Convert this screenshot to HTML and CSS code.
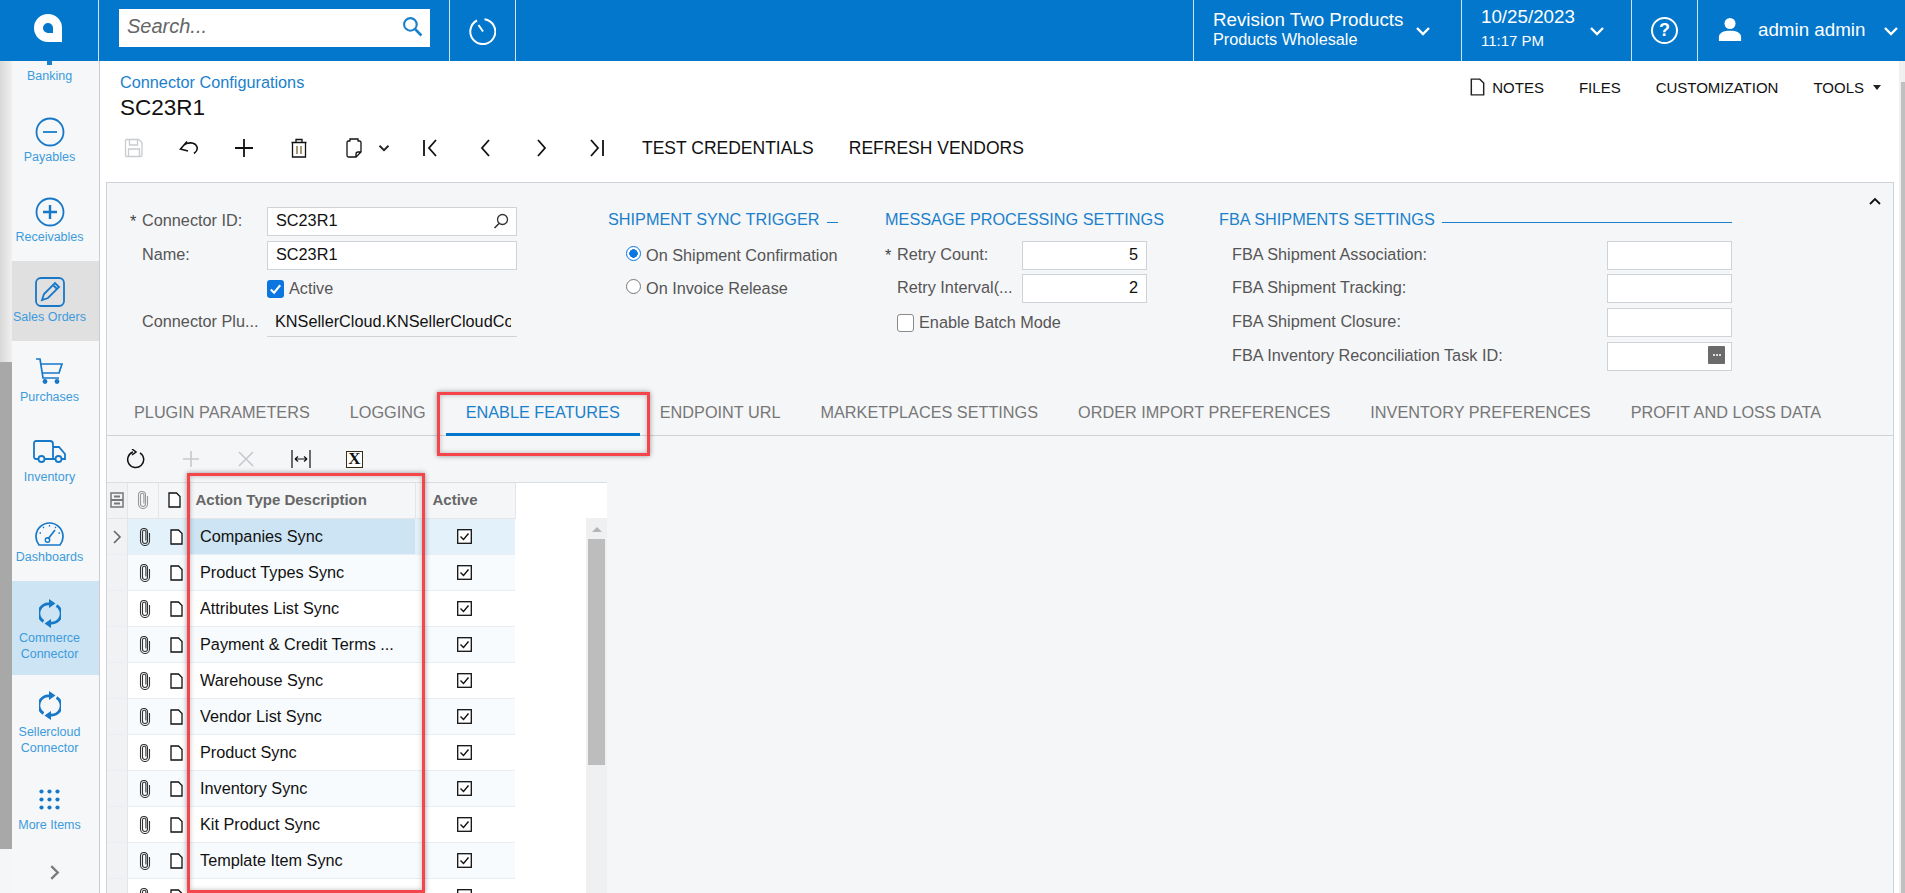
FILE: index.html
```html
<!DOCTYPE html>
<html lang="en">
<head>
<meta charset="utf-8">
<title>Connector Configurations</title>
<link rel="stylesheet" href="styles.css">
</head>
<body>
<svg class="defs" width="0" height="0" aria-hidden="true">
  <symbol id="chev" viewBox="0 0 16 16"><path d="M2 5l6 6 6-6" fill="none" stroke="currentColor" stroke-width="2.4"/></symbol>
  <symbol id="clip" viewBox="0 0 12 18"><path d="M8.5 4v9a2.5 2.5 0 0 1-5 0V4a1.7 1.7 0 0 1 3.4 0v8.5M10.5 5v8a4.5 4.5 0 0 1-9 0V4a3.5 3.5 0 0 1 7 0" fill="none" stroke="currentColor" stroke-width="1.1"/></symbol>
  <symbol id="doc" viewBox="0 0 13 16"><path d="M1 1h7.500L12 4.500V15H1z" fill="#fff" stroke="currentColor" stroke-width="1.300"/></symbol>
  <symbol id="sync" viewBox="0 0 22 29"><path d="M4.500 22.500A9.500 9.500 0 0 1 11 5M17.500 6.500A9.500 9.500 0 0 1 11 24" fill="none" stroke="currentColor" stroke-width="2.800"/><path d="M10 0l6.500 4.500L10 9zM12 20l-6.500 4.500L12 29z" fill="currentColor"/></symbol>
  <symbol id="check" viewBox="0 0 15 15"><rect x=".7" y=".7" width="13.6" height="13.6" fill="#fff" stroke="#111" stroke-width="1.3"/><path d="M3.500 7.500l3 3 5-6" fill="none" stroke="#111" stroke-width="1.400"/></symbol>
</svg>

<header class="topbar">
  <div class="logo-cell">
    <svg class="logo" viewBox="0 0 28 28"><path fill-rule="evenodd" d="M14 0a14 14 0 0 1 14 14v14H14a14 14 0 0 1 0-28zm0 9a5 5 0 1 0 0 10h5v-5a5 5 0 0 0-5-5z" fill="#fff"/></svg>
  </div>
  <div class="search-cell">
    <div class="search">
      <span class="search-text">Search...</span>
      <svg class="search-icon" viewBox="0 0 20 20"><circle cx="8" cy="8" r="6" fill="none" stroke="currentColor" stroke-width="2"/><path d="M12.500 12.500l6 6" stroke="currentColor" stroke-width="2.600"/></svg>
    </div>
  </div>
  <div class="clock-cell">
    <svg class="clock" viewBox="0 0 27 27"><path d="M8 2.500A12.500 12.500 0 1 0 15.500 1.200" fill="none" stroke="#fff" stroke-width="2"/><path d="M9.500 7l4.500 6.500" stroke="#fff" stroke-width="2"/></svg>
  </div>
  <div class="top-spacer"></div>
  <div class="company-cell">
    <div class="stack">
      <span class="company">Revision Two Products</span>
      <span class="branch">Products Wholesale</span>
    </div>
    <svg class="top-chev"><use href="#chev"/></svg>
  </div>
  <div class="date-cell">
    <div class="stack">
      <span class="date">10/25/2023</span>
      <span class="time">11:17 PM</span>
    </div>
    <svg class="top-chev"><use href="#chev"/></svg>
  </div>
  <div class="help-cell">
    <span class="help">?</span>
  </div>
  <div class="user-cell">
    <svg class="user-icon" viewBox="0 0 24 26"><circle cx="12" cy="7" r="6" fill="#fff"/><path d="M0 26v-4c0-5 5-7 12-7s12 2 12 7v4z" fill="#fff"/></svg>
    <span class="user-name">admin admin</span>
    <svg class="top-chev"><use href="#chev"/></svg>
  </div>
</header>

<div class="body-row">
  <div class="side-scroll">
    <div class="side-scroll-top"></div>
    <div class="side-scroll-thumb"></div>
  </div>
  <nav class="nav">
    <div class="nav-list">
      <a class="nav-item banking"><span class="nav-stub"></span><span>Banking</span></a>
      <a class="nav-item"><svg class="nav-icon" viewBox="0 0 30 30"><circle cx="15" cy="15" r="13.500" fill="none" stroke="currentColor" stroke-width="1.800"/><path d="M8 15h14" stroke="#2a8ad4" stroke-width="2"/></svg><span>Payables</span></a>
      <a class="nav-item"><svg class="nav-icon" viewBox="0 0 30 30"><circle cx="15" cy="15" r="13.500" fill="none" stroke="currentColor" stroke-width="1.800"/><path d="M8 15h14M15 8v14" stroke="currentColor" stroke-width="2.400"/></svg><span>Receivables</span></a>
      <a class="nav-item sel-grey"><svg class="nav-icon" viewBox="0 0 30 30"><rect x="1" y="1" width="28" height="28" rx="5" fill="none" stroke="currentColor" stroke-width="1.800"/><path d="M7 23l2-6L20 6l4 4-11 11zM18 8l4 4" fill="none" stroke="currentColor" stroke-width="1.800"/></svg><span>Sales Orders</span></a>
      <a class="nav-item"><svg class="nav-icon cart" viewBox="0 0 27 26"><path d="M0 1h4l3 19h16M5 6h21l-3 9H6.500" fill="none" stroke="currentColor" stroke-width="1.700"/><circle cx="9" cy="23.500" r="2.400" fill="currentColor"/><circle cx="21" cy="23.500" r="2.400" fill="currentColor"/></svg><span>Purchases</span></a>
      <a class="nav-item"><svg class="nav-icon truck" viewBox="0 0 33 23"><path d="M5 19H3a2 2 0 0 1-2-2V3a2 2 0 0 1 2-2h14a3 3 0 0 1 3 3v15h-8M20 7h6l6 7v5h-3M20 19h2" fill="none" stroke="currentColor" stroke-width="1.800"/><circle cx="8.500" cy="19" r="3" fill="none" stroke="currentColor" stroke-width="1.800"/><circle cx="25.500" cy="19" r="3" fill="none" stroke="currentColor" stroke-width="1.800"/></svg><span>Inventory</span></a>
      <a class="nav-item"><svg class="nav-icon gauge" viewBox="0 0 29 25"><path d="M4 24A13.500 13.500 0 1 1 25 24z" fill="none" stroke="currentColor" stroke-width="1.700"/><path d="M13 18l7-9" stroke="currentColor" stroke-width="1.700"/><circle cx="12.500" cy="19" r="2.200" fill="none" stroke="currentColor" stroke-width="1.400"/><path d="M14.500 4v1.500M8 6l1 1M21 6l-1 1M4.500 12H6M25 12h-1.500" stroke="currentColor" stroke-width="1.300"/></svg><span>Dashboards</span></a>
      <a class="nav-item sel-blue two"><svg class="nav-icon sync-icon"><use href="#sync"/></svg><span>Commerce<br>Connector</span></a>
      <a class="nav-item two second"><svg class="nav-icon sync-icon"><use href="#sync"/></svg><span>Sellercloud<br>Connector</span></a>
      <a class="nav-item"><svg class="nav-icon dots" viewBox="0 0 21 21"><g fill="currentColor"><circle cx="2.500" cy="2.500" r="2.100"/><circle cx="10.500" cy="2.500" r="2.100"/><circle cx="18.500" cy="2.500" r="2.100"/><circle cx="2.500" cy="10.500" r="2.100"/><circle cx="10.500" cy="10.500" r="2.100"/><circle cx="18.500" cy="10.500" r="2.100"/><circle cx="2.500" cy="18.500" r="2.100"/><circle cx="10.500" cy="18.500" r="2.100"/><circle cx="18.500" cy="18.500" r="2.100"/></g></svg><span>More Items</span></a>
    </div>
    <svg class="nav-expand" viewBox="0 0 10 14"><path d="M2 1l6 6-6 6" fill="none" stroke="#7a7a7a" stroke-width="2.200"/></svg>
  </nav>

  <main class="content">
    <div class="page-head">
      <div class="titles">
        <a class="crumb">Connector Configurations</a>
        <h1 class="title">SC23R1</h1>
      </div>
      <div class="page-links">
        <svg class="notes-icon"><use href="#doc"/></svg>
        <span class="link notes">NOTES</span>
        <span class="link files">FILES</span>
        <span class="link custom">CUSTOMIZATION</span>
        <span class="link tools">TOOLS</span>
        <span class="caret"></span>
      </div>
    </div>

    <div class="toolbar">
      <svg class="tb" viewBox="0 0 20 20"><path d="M2.500 1.500h12l3.500 3v12.500a1.500 1.500 0 0 1-1.500 1.500h-14a1 1 0 0 1-1-1V2.500a1 1 0 0 1 1-1zM5.500 1.500v5.500h8V1.500M4.500 18.500v-7.500h11v7.500" fill="none" stroke="#c8cbcf" stroke-width="1.300"/></svg>
      <svg class="tb" viewBox="0 0 20 20"><path d="M8 3.500L1.500 11l7.500 2M4.500 7.500C8 4 16 3.500 18 9c1 3-1 5-3 6.500" fill="none" stroke="#111" stroke-width="1.600"/></svg>
      <svg class="tb" viewBox="0 0 20 20"><path d="M10 1v18M1 10h18" stroke="#111" stroke-width="1.800"/></svg>
      <svg class="tb" viewBox="0 0 20 20"><path d="M2.500 4.500h15M7 4.500V1.500h6v3M3.500 4.500v14.500h13V4.500" fill="none" stroke="#111" stroke-width="1.300"/><path d="M8 8v8M12 8v8" stroke="#7a6230" stroke-width="1.300"/></svg>
      <svg class="tb tb-paste" viewBox="0 0 20 20"><path d="M6 3H4.500A1.500 1.500 0 0 0 3 4.500v13A1.500 1.500 0 0 0 4.500 19H12l5-5V4.500A1.500 1.500 0 0 0 15.500 3H14M6 3.500V1h8v2.500M12 19v-3c0-1 1-2 2-2h3" fill="none" stroke="#111" stroke-width="1.300"/></svg>
      <svg class="tb-chev"><use href="#chev"/></svg>
      <svg class="tb" viewBox="0 0 20 20"><path d="M3 2v16M15 2l-7 8 7 8" fill="none" stroke="#111" stroke-width="1.800"/></svg>
      <svg class="tb" viewBox="0 0 20 20"><path d="M13 2l-7 8 7 8" fill="none" stroke="#111" stroke-width="1.800"/></svg>
      <svg class="tb" viewBox="0 0 20 20"><path d="M7 2l7 8-7 8" fill="none" stroke="#111" stroke-width="1.800"/></svg>
      <svg class="tb" viewBox="0 0 20 20"><path d="M5 2l7 8-7 8M17 2v16" fill="none" stroke="#111" stroke-width="1.800"/></svg>
      <button class="tb-text first">TEST CREDENTIALS</button>
      <button class="tb-text">REFRESH VENDORS</button>
    </div>

    <section class="panel">
      <svg class="collapse" viewBox="0 0 12 8"><path d="M1 7l5-5 5 5" fill="none" stroke="#111" stroke-width="1.800"/></svg>
      <div class="form">
        <div class="col col-a">
          <div class="row"><span class="req">*</span><label class="lbl lbl-a">Connector ID:</label><span class="input wide-in">SC23R1<svg class="lookup" viewBox="0 0 16 16"><circle cx="9.500" cy="6.500" r="5" fill="none" stroke="#333" stroke-width="1.300"/><path d="M6 10.500L1.500 15" stroke="#333" stroke-width="1.600"/></svg></span></div>
          <div class="row"><span class="req"></span><label class="lbl lbl-a">Name:</label><span class="input wide-in">SC23R1</span></div>
          <div class="row"><span class="req"></span><span class="lbl lbl-a"></span><span class="cb on"><svg viewBox="0 0 18 18"><path d="M4 9.500l3.500 3.500L14 5" fill="none" stroke="#fff" stroke-width="2.200"/></svg></span><span class="cb-label">Active</span></div>
          <div class="row"><span class="req"></span><label class="lbl lbl-a">Connector Plu...</label><span class="input wide-in flat"><span class="clip-text">KNSellerCloud.KNSellerCloudConnector</span></span></div>
        </div>
        <div class="col col-b">
          <div class="sec"><span class="sec-text">SHIPMENT SYNC TRIGGER</span><span class="sec-line"></span></div>
          <div class="row radio-row"><span class="radio on"></span><span class="opt">On Shipment Confirmation</span></div>
          <div class="row radio-row"><span class="radio"></span><span class="opt">On Invoice Release</span></div>
        </div>
        <div class="col col-c">
          <div class="sec"><span class="sec-text">MESSAGE PROCESSING SETTINGS</span></div>
          <div class="row"><span class="req req-c">*</span><label class="lbl lbl-c">Retry Count:</label><span class="input num">5</span></div>
          <div class="row"><span class="req req-c"></span><label class="lbl lbl-c">Retry Interval(...</label><span class="input num">2</span></div>
          <div class="row batch"><span class="cb"></span><span class="cb-label">Enable Batch Mode</span></div>
        </div>
        <div class="col col-d">
          <div class="sec"><span class="sec-text">FBA SHIPMENTS SETTINGS</span><span class="sec-line grow"></span></div>
          <div class="row fba"><label class="lbl lbl-d">FBA Shipment Association:</label><span class="input small"></span></div>
          <div class="row fba"><label class="lbl lbl-d">FBA Shipment Tracking:</label><span class="input small"></span></div>
          <div class="row fba"><label class="lbl lbl-d">FBA Shipment Closure:</label><span class="input small"></span></div>
          <div class="row fba"><label class="lbl lbl-d">FBA Inventory Reconciliation Task ID:</label><span class="input small"><span class="dots-btn"><i></i><i></i><i></i></span></span></div>
        </div>
      </div>

      <div class="tabs">
        <span class="tab">PLUGIN PARAMETERS</span>
        <span class="tab">LOGGING</span>
        <span class="tab active">ENABLE FEATURES</span>
        <span class="tab">ENDPOINT URL</span>
        <span class="tab">MARKETPLACES SETTINGS</span>
        <span class="tab">ORDER IMPORT PREFERENCES</span>
        <span class="tab">INVENTORY PREFERENCES</span>
        <span class="tab">PROFIT AND LOSS DATA</span>
      </div>

      <div class="grid-tools">
        <svg class="tb" viewBox="0 0 20 20"><path d="M14 3.800A8 8 0 1 1 7 3M6 0l4 3-4 3" fill="none" stroke="#111" stroke-width="1.500"/></svg>
        <svg class="tb" viewBox="0 0 20 20"><path d="M10 2v16M2 10h16" stroke="#c6c9cc" stroke-width="1.600"/></svg>
        <svg class="tb" viewBox="0 0 20 20"><path d="M3 3l14 14M17 3L3 17" stroke="#c6c9cc" stroke-width="1.600"/></svg>
        <svg class="tb" viewBox="0 0 20 20"><path d="M1 1v18M19 1v18M4 10h12M4 10l3-2.500M4 10l3 2.500M16 10l-3-2.500M16 10l-3 2.500" fill="none" stroke="#111" stroke-width="1.200"/></svg>
        <span class="excel">X</span>
      </div>

      <div class="grid">
        <table class="table">
          <colgroup><col class="c1"><col class="c2"><col class="c3"><col class="c4"><col class="c5"></colgroup>
          <thead>
            <tr>
              <th class="ico-c first-c"><svg class="head-rows" viewBox="0 0 14 16"><path d="M1 1h12v14H1z" fill="none" stroke="#777" stroke-width="1.500"/><path d="M1 8h12M4 4.500h6M4 11.500h6" stroke="#777" stroke-width="1.800"/></svg></th>
              <th class="ico-c"><svg class="clip head-clip"><use href="#clip"/></svg></th>
              <th class="ico-c"><svg class="doc"><use href="#doc"/></svg></th>
              <th class="desc-h">Action Type Description</th>
              <th class="act-h">Active</th>
            </tr>
          </thead>
          <tbody>
            <tr class="cur"><td class="first-c"><svg class="row-arrow" viewBox="0 0 10 14"><path d="M2 1l6 6-6 6" fill="none" stroke="#666" stroke-width="1.600"/></svg></td><td class="ico-c"><svg class="clip"><use href="#clip"/></svg></td><td class="ico-c"><svg class="doc"><use href="#doc"/></svg></td><td class="desc">Companies Sync</td><td class="act"><svg class="chk"><use href="#check"/></svg></td></tr>
            <tr class="alt"><td class="first-c"></td><td class="ico-c"><svg class="clip"><use href="#clip"/></svg></td><td class="ico-c"><svg class="doc"><use href="#doc"/></svg></td><td class="desc">Product Types Sync</td><td class="act"><svg class="chk"><use href="#check"/></svg></td></tr>
            <tr><td class="first-c"></td><td class="ico-c"><svg class="clip"><use href="#clip"/></svg></td><td class="ico-c"><svg class="doc"><use href="#doc"/></svg></td><td class="desc">Attributes List Sync</td><td class="act"><svg class="chk"><use href="#check"/></svg></td></tr>
            <tr class="alt"><td class="first-c"></td><td class="ico-c"><svg class="clip"><use href="#clip"/></svg></td><td class="ico-c"><svg class="doc"><use href="#doc"/></svg></td><td class="desc">Payment &amp; Credit Terms ...</td><td class="act"><svg class="chk"><use href="#check"/></svg></td></tr>
            <tr><td class="first-c"></td><td class="ico-c"><svg class="clip"><use href="#clip"/></svg></td><td class="ico-c"><svg class="doc"><use href="#doc"/></svg></td><td class="desc">Warehouse Sync</td><td class="act"><svg class="chk"><use href="#check"/></svg></td></tr>
            <tr class="alt"><td class="first-c"></td><td class="ico-c"><svg class="clip"><use href="#clip"/></svg></td><td class="ico-c"><svg class="doc"><use href="#doc"/></svg></td><td class="desc">Vendor List Sync</td><td class="act"><svg class="chk"><use href="#check"/></svg></td></tr>
            <tr><td class="first-c"></td><td class="ico-c"><svg class="clip"><use href="#clip"/></svg></td><td class="ico-c"><svg class="doc"><use href="#doc"/></svg></td><td class="desc">Product Sync</td><td class="act"><svg class="chk"><use href="#check"/></svg></td></tr>
            <tr class="alt"><td class="first-c"></td><td class="ico-c"><svg class="clip"><use href="#clip"/></svg></td><td class="ico-c"><svg class="doc"><use href="#doc"/></svg></td><td class="desc">Inventory Sync</td><td class="act"><svg class="chk"><use href="#check"/></svg></td></tr>
            <tr><td class="first-c"></td><td class="ico-c"><svg class="clip"><use href="#clip"/></svg></td><td class="ico-c"><svg class="doc"><use href="#doc"/></svg></td><td class="desc">Kit Product Sync</td><td class="act"><svg class="chk"><use href="#check"/></svg></td></tr>
            <tr class="alt"><td class="first-c"></td><td class="ico-c"><svg class="clip"><use href="#clip"/></svg></td><td class="ico-c"><svg class="doc"><use href="#doc"/></svg></td><td class="desc">Template Item Sync</td><td class="act"><svg class="chk"><use href="#check"/></svg></td></tr>
            <tr><td class="first-c"></td><td class="ico-c"><svg class="clip"><use href="#clip"/></svg></td><td class="ico-c"><svg class="doc"><use href="#doc"/></svg></td><td class="desc"></td><td class="act"><svg class="chk"><use href="#check"/></svg></td></tr>
          </tbody>
        </table>
        <div class="grid-gap"></div>
        <div class="vscroll">
          <span class="vs-up"></span>
          <span class="vs-thumb"></span>
        </div>
      </div>
    </section>
    <div class="page-scroll"><span class="page-thumb"></span></div>
  </main>
</div>

<div class="mark mark-tab"></div>
<div class="mark mark-col"></div>
</body>
</html>
```

FILE: styles.css
```css
* { box-sizing: border-box; }
html, body { margin: 0; height: 100%; overflow: hidden; }
body {
  font-family: "Liberation Sans", Arial, sans-serif;
  font-size: 16.25px;
  color: #111;
  background: #fff;
  width: 1905px;
  height: 893px;
  display: flex;
  flex-direction: column;
  position: relative;
}
.defs { position: absolute; }

/* top bar */
.topbar { height: 61px; flex: none; background: #0277cc; color: #fff; display: flex; }
.logo-cell { width: 99px; display: flex; justify-content: center; align-items: center; padding-bottom: 6px; padding-right: 2px; border-right: 1px solid #cfe4f4; }
.logo { width: 28px; height: 28px; }
.search-cell { width: 351px; padding: 9px 19px 0 20px; border-right: 1px solid #cfe4f4; }
.search { height: 38px; background: #fff; display: flex; align-items: center; justify-content: space-between; padding: 0 7px 4px 8px; }
.search-text { font-style: italic; font-size: 20px; color: #666; }
.search-icon { width: 21px; height: 21px; color: #1980cc; }
.clock-cell { width: 66px; border-right: 1px solid #cfe4f4; display: flex; justify-content: center; align-items: center; padding-top: 2px; }
.clock { width: 27px; height: 27px; }
.top-spacer { width: 678px; border-right: 1px solid #cfe4f4; }
.company-cell { width: 268px; border-right: 1px solid #cfe4f4; display: flex; align-items: center; padding-left: 19px; padding-right: 30px; justify-content: space-between; }
.date-cell { width: 170px; border-right: 1px solid #cfe4f4; display: flex; align-items: center; padding-left: 19px; padding-right: 26px; justify-content: space-between; }
.stack { display: flex; flex-direction: column; margin-bottom: 3px; white-space: nowrap; }
.company { font-size: 18.75px; line-height: 20px; }
.branch { font-size: 16.25px; line-height: 18px; }
.date { font-size: 18.75px; line-height: 24px; }
.time { font-size: 15px; line-height: 24px; }
.top-chev { width: 16px; height: 16px; color: #fff; flex: none; }
.help-cell { width: 66px; border-right: 1px solid #cfe4f4; display: flex; align-items: center; justify-content: center; }
.help { width: 27px; height: 27px; border: 2px solid #fff; border-radius: 50%; display: flex; align-items: center; justify-content: center; font-size: 18px; font-weight: 700; }
.user-cell { flex: 1; display: flex; align-items: center; padding-left: 20px; }
.user-icon { width: 24px; height: 24px; margin-bottom: 4px; flex: none; }
.user-name { font-size: 18.75px; margin-left: 16px; margin-right: 18px; margin-bottom: 2px; white-space: nowrap; }

/* body */
.body-row { flex: 1; min-height: 0; display: flex; }
.side-scroll { width: 12px; flex: none; background: #f4f6f8; display: flex; flex-direction: column; }
.side-scroll-top { height: 301px; background: linear-gradient(90deg, #d8d8d8, #f0f0f0); }
.side-scroll-thumb { height: 487px; background: #a8a8a8; }
.nav { width: 88px; flex: none; background: #f5f7f9; border-right: 1px solid #c9cdd1; display: flex; flex-direction: column; position: relative; }
.nav-list { flex: 1; display: flex; flex-direction: column; }
.nav-item { display: flex; flex-direction: column; align-items: center; height: 80px; justify-content: flex-end; padding: 0 12px 16px 0; font-size: 12.5px; line-height: 16px; color: #3d9bdc; text-align: center; white-space: nowrap; flex: none; }
.nav-item.banking { height: 40px; padding-bottom: 17px; position: relative; }
.nav-stub { position: absolute; top: 0; left: 35px; width: 5px; height: 4px; background: #1a80cc; }
.nav-item.two { height: 94px; padding-bottom: 13px; }
.sel-grey { background: #e0e0e0; }
.sel-blue { background: #cce4f4; }
.nav-icon { width: 30px; height: 30px; color: #1778c8; margin-bottom: 2px; flex: none; }
.nav-icon.cart { width: 27px; height: 26px; margin-bottom: 5px; }
.nav-icon.truck { width: 33px; height: 23px; margin-bottom: 6px; }
.nav-icon.gauge { width: 29px; height: 25px; margin-bottom: 3px; }
.nav-icon.sync-icon { width: 22px; height: 29px; }
.second .nav-icon.sync-icon { margin-bottom: 4px; }
.nav-icon.dots { width: 21px; height: 21px; margin-bottom: 7px; }
.nav-expand { width: 11px; height: 15px; position: absolute; left: 37px; bottom: 13px; }

/* content */
.content { flex: 1; min-width: 0; padding: 0 11px 0 6px; position: relative; display: flex; flex-direction: column; }
.page-scroll { position: absolute; right: 0; top: 0; bottom: 0; width: 6px; background: #f0f0f0; display: flex; justify-content: flex-end; padding-top: 21px; }
.page-thumb { width: 4px; height: 100%; background: #c0c0c0; }
.page-head { height: 61px; display: flex; justify-content: space-between; flex: none; padding-left: 14px; }
.titles { padding-top: 11px; }
.crumb { display: block; font-size: 16.25px; line-height: 20px; color: #1b80cc; }
.title { margin: 0; font-size: 22.5px; font-weight: 400; line-height: 32px; color: #111; }
.page-links { display: flex; align-items: center; height: 52px; padding-right: 13px; font-size: 15px; }
.notes-icon { width: 15px; height: 18px; color: #222; margin-right: 7px; }
.link { margin-right: 35px; white-space: nowrap; }
.tools { margin-right: 9px; }
.caret { width: 0; height: 0; border-left: 4px solid transparent; border-right: 4px solid transparent; border-top: 5px solid #222; }

.toolbar { height: 60px; flex: none; display: flex; align-items: center; padding-left: 18px; padding-bottom: 8px; }
.tb { width: 20px; height: 20px; flex: none; margin-right: 35px; }
.tb-paste { margin-right: 14px; }
.tb-chev { width: 12px; height: 12px; color: #222; margin-right: 31px; }
.tb-text { background: none; border: 0; padding: 0; font: inherit; font-size: 17.5px; color: #111; margin-right: 35px; white-space: nowrap; }
.tb-text.first { margin-left: 1px; }

.panel { flex: 1; min-height: 0; background: #f5f6f8; border: 1px solid #cfd2d6; border-bottom: 0; display: flex; flex-direction: column; position: relative; }
.collapse { position: absolute; right: 12px; top: 14px; width: 12px; height: 8px; }

.form { height: 209px; flex: none; display: flex; padding-top: 22px; }
.col { display: flex; flex-direction: column; }
.col-a { margin-left: 23px; width: 478px; }
.col-b { width: 277px; }
.col-c { width: 334px; }
.col-d { width: 513px; }
.row { height: 33.6px; display: flex; align-items: center; flex: none; }
.req { width: 12px; flex: none; color: #444; }
.req-c { width: 12px; }
.lbl { color: #555; white-space: nowrap; overflow: hidden; padding-bottom: 2px; }
.lbl-a { width: 125px; }
.lbl-c { width: 125px; }
.lbl-d { width: 375px; }
.input { background: #fff; border: 1px solid #cfd2d6; height: 29px; display: flex; align-items: center; padding: 0 8px 2px; color: #111; position: relative; }
.wide-in { width: 250px; justify-content: space-between; }
.flat { border: 0; border-bottom: 1px solid #cfd2d6; background: transparent; padding-right: 6px; }
.clip-text { overflow: hidden; white-space: nowrap; }
.lookup { width: 16px; height: 16px; margin-right: -1px; }
.num { width: 125px; justify-content: flex-end; }
.small { width: 125px; }
.dots-btn { position: absolute; right: 6px; top: 3px; width: 17px; height: 18px; background: #6b6b6b; border-radius: 1px; display: flex; align-items: center; justify-content: center; gap: 1px; }
.dots-btn i { width: 2px; height: 2px; background: #ddd; display: block; }
.cb { width: 17px; height: 18px; border: 1.5px solid #8a8a8a; border-radius: 3px; background: #fff; flex: none; display: block; }
.cb.on { background: #0b75e0; border: 0; }
.cb.on svg { width: 17px; height: 18px; display: block; }
.cb-label { margin-left: 5px; color: #555; }
.batch { padding-left: 12px; }
.sec { height: 33.6px; display: flex; align-items: center; color: #1b80cc; padding-bottom: 5px; }
.sec-text { white-space: nowrap; }
.sec-line { width: 11px; height: 1px; background: #1b80cc; margin-left: 7px; margin-top: 6px; flex: none; }
.sec-line.grow { width: 290px; }
.radio-row { padding-left: 18px; }
.radio { width: 15px; height: 15px; border: 1.5px solid #777; border-radius: 50%; background: #fff; flex: none; margin-right: 5px; margin-bottom: 4px; }
.radio.on { border-color: #0b75e0; background: radial-gradient(circle, #0b75e0 0 4px, #fff 4.5px); }
.opt { color: #555; }
.fba { padding-left: 13px; }

.tabs { height: 44px; flex: none; display: flex; border-bottom: 1px solid #cfd2d6; padding-left: 7px; color: #777; }
.tab { padding: 11px 20px 0; white-space: nowrap; height: 44px; }
.tab.active { color: #1b80cc; border-bottom: 3px solid #0277cc; }

.grid-tools { height: 46px; flex: none; display: flex; align-items: center; padding-left: 19px; }
.excel { width: 17px; height: 17px; border: 1.5px solid #3a2c10; background: #fff; font-family: "Liberation Serif", serif; font-weight: 700; font-size: 17px; line-height: 14px; text-align: center; color: #111; }

.grid { width: 500px; flex: 1; min-height: 0; background: #fff; border-top: 1px solid #dcdfe2; display: flex; overflow: hidden; }
.table { width: 408px; table-layout: fixed; border-collapse: collapse; flex: none; align-self: flex-start; font-size: 16.25px; }
.c1 { width: 20px; } .c2 { width: 31px; } .c3 { width: 32px; } .c4 { width: 225px; } .c5 { width: 100px; }
th { height: 35px; background: #f5f6f8; border-right: 1px solid #e3e5e8; border-bottom: 1px solid #e3e5e8; padding: 0 0 2px; color: #666; font-size: 15px; font-weight: 700; text-align: left; white-space: nowrap; }
td { height: 36px; padding: 0; border-bottom: 1px solid #e8eef3; text-align: center; }
.first-c { background: #f0f2f4; border-right: 1px solid #e3e5e8; text-align: center; }
.ico-c { text-align: center; }
td.ico-c { padding-left: 4px; }
th.ico-c svg, td svg { display: inline-block; vertical-align: middle; }
.desc-h { padding-left: 5px; }
.act-h { padding-left: 17px; }
.desc { text-align: left; padding-left: 10px; color: #111; white-space: nowrap; }
.act { padding-right: 2px; }
.alt td:not(.first-c) { background: #f7fbfd; }
.cur td:not(.first-c) { background: #e3f1fa; }
.cur td.desc { background: #cce4f4; }
.clip { width: 12px; height: 18px; color: #333; }
.head-clip { color: #999; }
.doc { width: 13px; height: 16px; color: #111; }
.head-rows { width: 14px; height: 16px; }
.row-arrow { width: 10px; height: 14px; }
.chk { width: 15px; height: 15px; margin-bottom: 2px; }
.grid-gap { flex: 1; }
.vscroll { width: 21px; flex: none; background: #eef0f2; margin-top: 35px; display: flex; flex-direction: column; align-items: center; }
.vs-up { margin-top: 9px; width: 0; height: 0; border-left: 5px solid transparent; border-right: 5px solid transparent; border-bottom: 5px solid #b5b5b5; }
.vs-thumb { margin-top: 7px; width: 17px; height: 226px; background: #bdbdbd; }

/* annotation rectangles drawn on the screenshot */
.mark { position: absolute; border: 3px solid #f5444a; box-shadow: 0 0 5px rgba(0, 0, 0, .4), inset 0 0 5px rgba(0, 0, 0, .25); pointer-events: none; }
.mark-tab { left: 437px; top: 392px; width: 213px; height: 64px; }
.mark-col { left: 187px; top: 473px; width: 238px; height: 420px; }
```
